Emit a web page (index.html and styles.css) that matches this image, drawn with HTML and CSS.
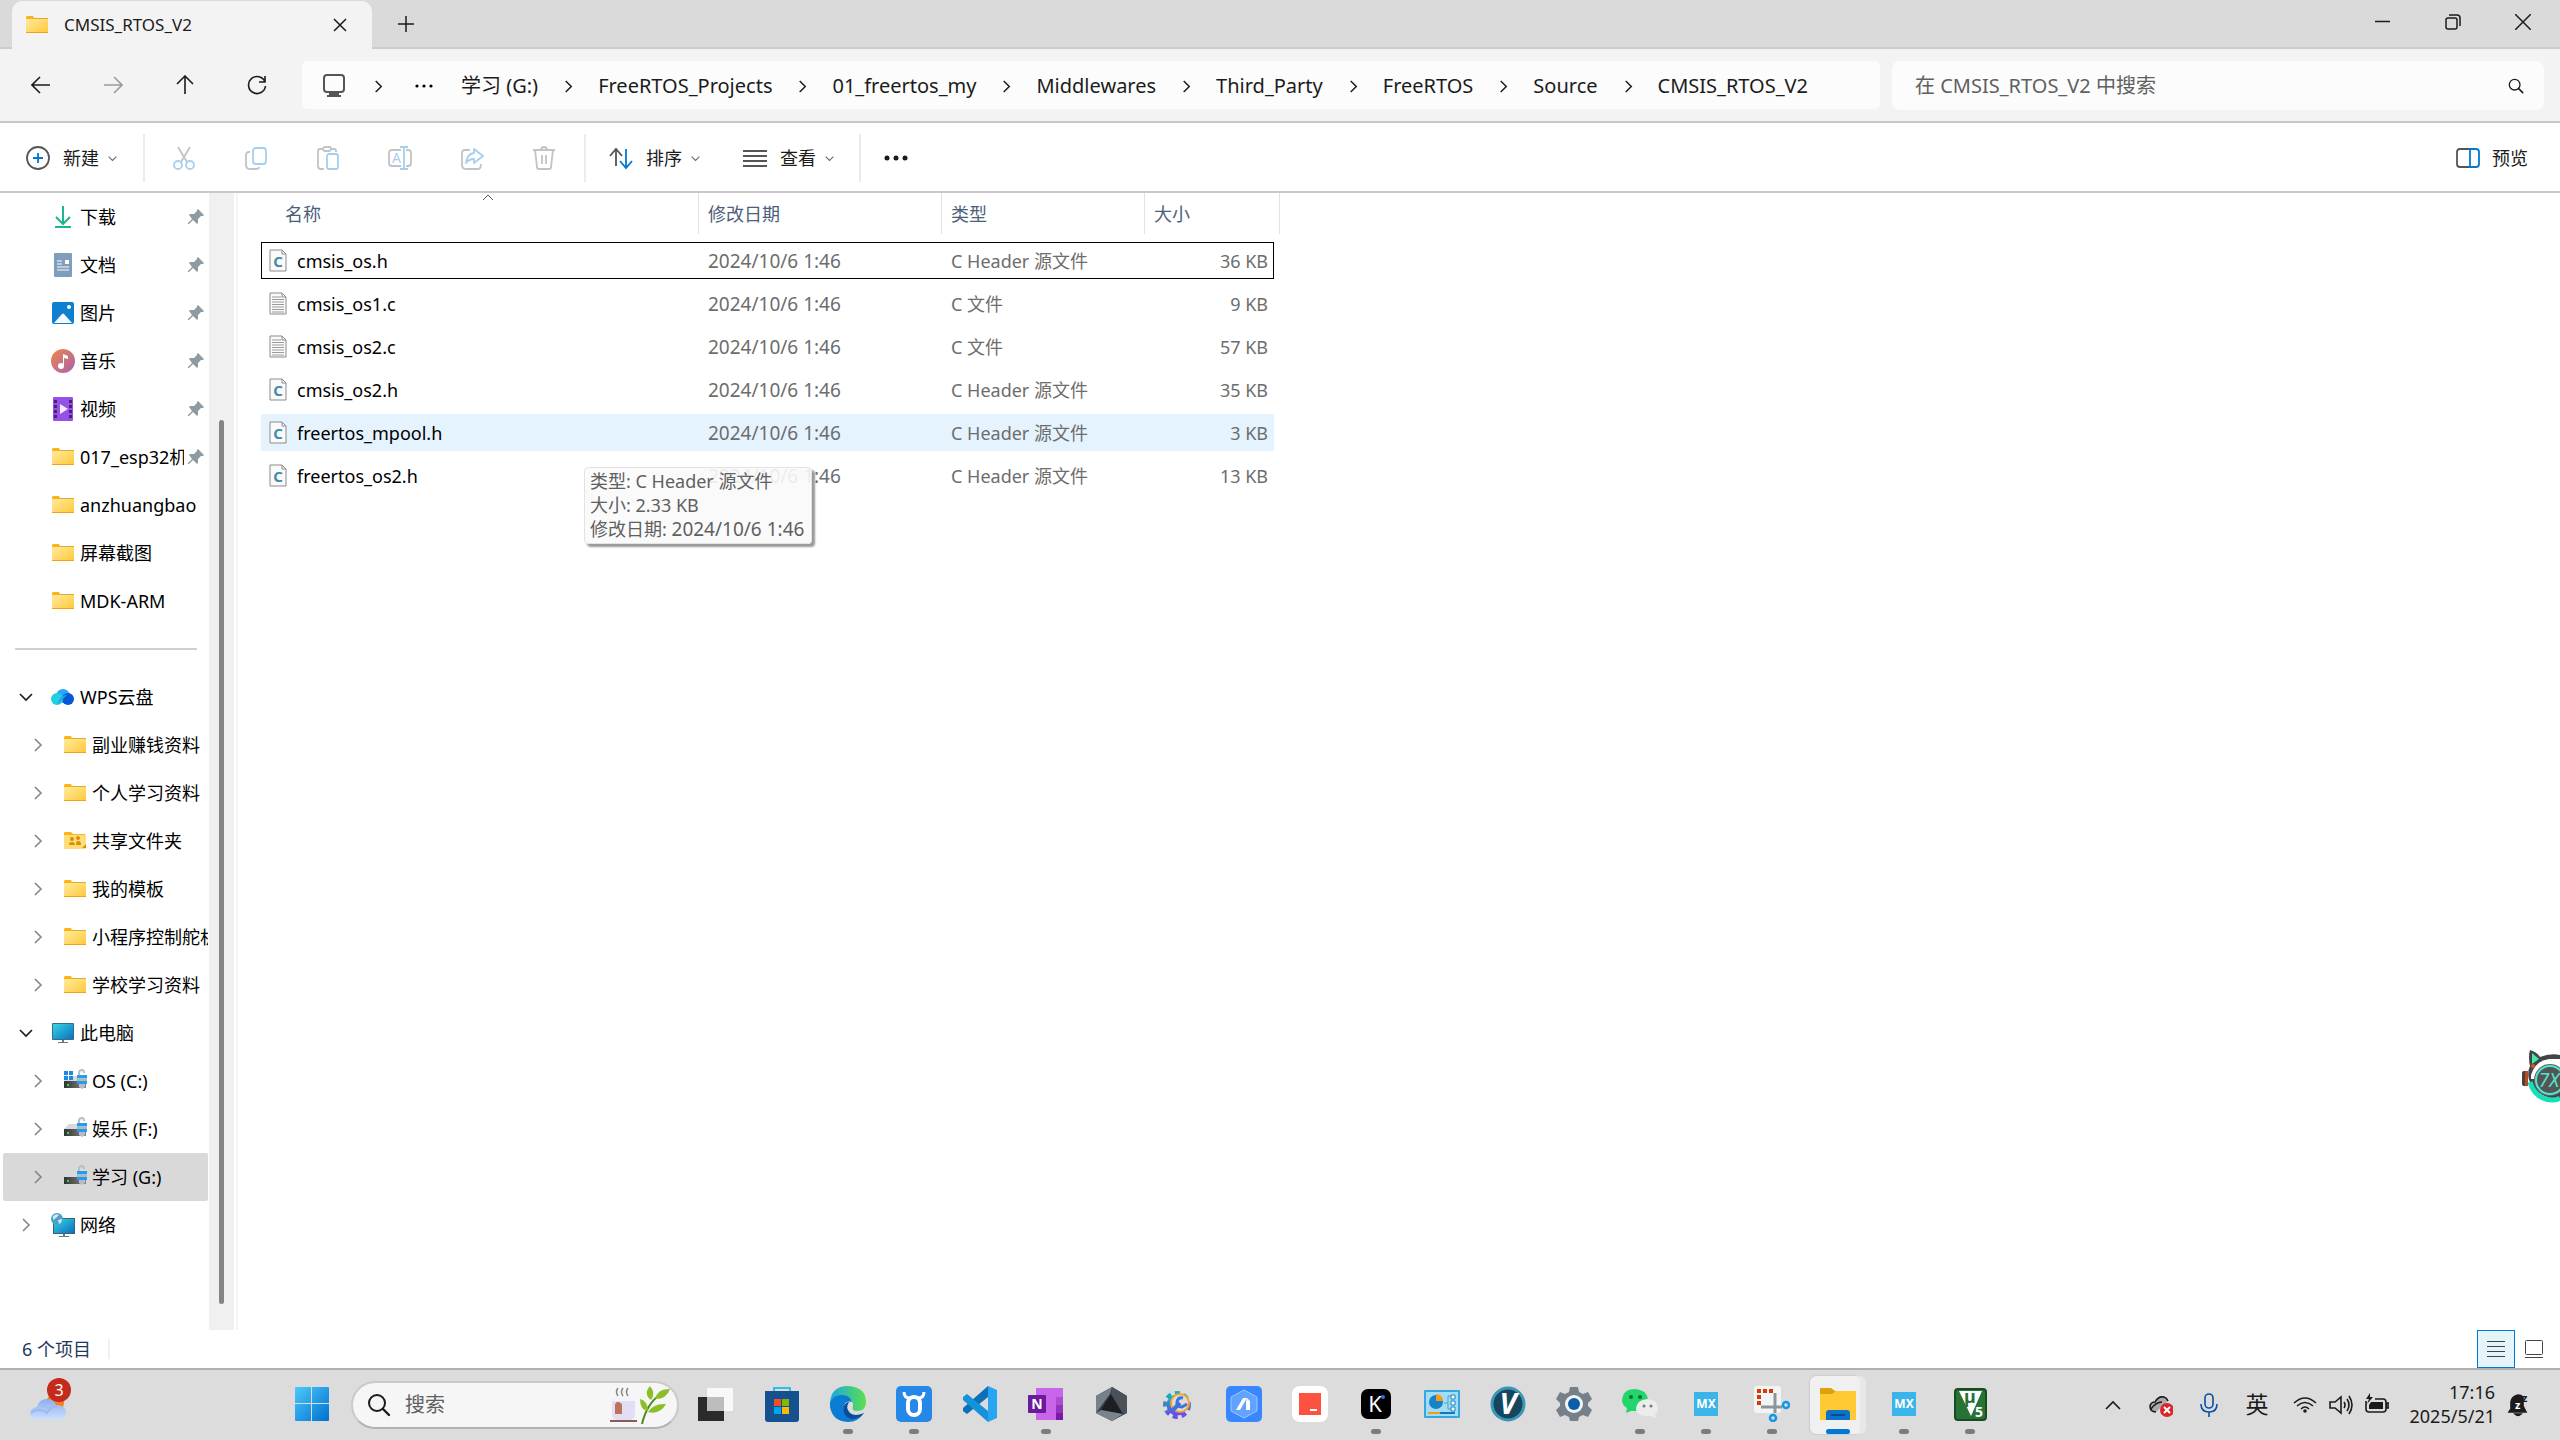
FILE: index.html
```
<!DOCTYPE html>
<html lang="zh-CN">
<head>
    <meta charset="UTF-8">
    <title>CMSIS_RTOS_V2</title>
    <link rel="stylesheet" href="styles.css">
</head>
<body>
    <!-- shared icons -->
    <svg class="defs" aria-hidden="true">
        <defs>
            <linearGradient id="gFolder" x1="0" y1="0" x2="1" y2="1"><stop offset="0" stop-color="#ffe9a0"/><stop offset="1" stop-color="#ffc937"/></linearGradient>
            <linearGradient id="gBlue" x1="0" y1="0" x2="1" y2="1"><stop offset="0" stop-color="#4cc9fb"/><stop offset="1" stop-color="#0070d0"/></linearGradient>
            <linearGradient id="gScreen" x1="0" y1="0" x2="1" y2="1"><stop offset="0" stop-color="#35d6e4"/><stop offset="1" stop-color="#0c6fc0"/></linearGradient>
            <linearGradient id="gDrive" x1="0" y1="0" x2="1" y2="0"><stop offset="0" stop-color="#333"/><stop offset="1" stop-color="#888"/></linearGradient>
        </defs>
        <symbol id="folder" viewBox="0 0 24 24">
            <path d="M1 5q0-2 1-2h6l1 2 1 1h12v4H1z" fill="#f9b416"/>
            <path d="M1 6h22v13q0 1-1 1H2q-1 0-1-1z" fill="url(#gFolder)"/>
            <path d="M1 19h22v1H1z" fill="#eba51c"/><path d="M9 5h14v1H9z" fill="#e9a820"/>
        </symbol>
        <symbol id="shared" viewBox="0 0 24 24">
            <path d="M1 4q0-1 1-1h6l2 2h12v5H1z" fill="#f9b416"/>
            <path d="M1 6h22v14H1z" fill="#ffdc7c"/>
            <circle cx="9" cy="10" r="2" fill="#dc9000"/><circle cx="15" cy="9" r="2" fill="#dc9000"/>
            <path d="M6 16q0-3 3-3t3 3zM13 16q0-4 2-4 3 0 3 3v1zM19 19l4-4v4z" fill="#dc9000"/>
        </symbol>
        <symbol id="pin" viewBox="0 0 16 16"><path d="M10 0l6 6-1 1-2 0-3 3 0 4-1 1-4-4-4 4-1 0 0-1 4-4-3-4 1-1 4 0 3-3 0-1z" fill="#8f9ba3"/></symbol>
        <symbol id="chev" viewBox="0 0 14 14"><path d="M4 1l6 6-6 6" fill="none" stroke="currentColor" stroke-width="1.6"/></symbol>
        <symbol id="chevdown" viewBox="0 0 14 14"><path d="M1 4l6 6 6-6" fill="none" stroke="currentColor" stroke-width="1.6"/></symbol>
        <symbol id="drive" viewBox="0 0 24 24">
            <path d="M1 12l5-5h13l4 5z" fill="#d8d9dc"/><path d="M1 12h22v7H1z" fill="url(#gDrive)"/>
            <path d="M4 15h2v2H4z" fill="#2fe03a"/>
            <path d="M16 8V4q0-3 3-3 2 0 2 3" fill="none" stroke="#b4bfc8" stroke-width="2"/>
            <rect x="14" y="6" width="10" height="9" fill="#2b9be8"/><path d="M14 9h10v3H14z" fill="#a8bccb"/>
            <path d="M16 15h6v3l-3 2-3-2z" fill="#b6bdc5"/>
        </symbol>
        <symbol id="hfile" viewBox="0 0 18 24">
            <path d="M1 1h12l4 4v17H1z" fill="#fafafa" stroke="#8b8b8b"/><path d="M13 1v4h4" fill="none" stroke="#8b8b8b"/>
            <text x="9" y="18" class="filemark">C</text>
        </symbol>
        <symbol id="cfile" viewBox="0 0 18 24">
            <path d="M1 1h12l4 4v17H1z" fill="#fafafa" stroke="#8b8b8b"/><path d="M13 1v4h4" fill="none" stroke="#8b8b8b"/>
            <path d="M3 5h9M3 7.500h12M3 10h12M3 12.500h12M3 15h12M3 17.500h12M3 20h12" stroke="#9a9a9a" stroke-width="1"/>
        </symbol>
        <symbol id="lens" viewBox="0 0 24 24"><circle cx="10" cy="10" r="8" fill="none" stroke="currentColor" stroke-width="2"/><path d="M16 16l6 6" stroke="currentColor" stroke-width="2.400" stroke-linecap="round"/></symbol>
        <symbol id="mx" viewBox="0 0 36 36"><path d="M6 6h24v24H6z" fill="#3bb4ea"/><text x="18" y="22" class="mark mx">MX</text></symbol>
    </svg>

    <header class="titlebar">
        <div class="tab">
            <svg class="i24"><use href="#folder"/></svg>
            <span class="tab-name">CMSIS_RTOS_V2</span>
            <button class="tab-close" aria-label="关闭标签页"><svg class="i14" viewBox="0 0 14 14"><path d="M1 1l12 12M13 1L1 13"/></svg></button>
        </div>
        <button class="tab-add" aria-label="新标签页"><svg class="i16" viewBox="0 0 16 16"><path d="M8 0v16M0 8h16"/></svg></button>
        <div class="window-buttons">
            <button aria-label="最小化"><svg class="i16" viewBox="0 0 16 16"><path d="M0 7.500h15"/></svg></button>
            <button aria-label="还原"><svg class="i16" viewBox="0 0 16 16"><rect x="1" y="4" width="11" height="11" rx="2"/><path d="M4 1h8q3 0 3 3v8"/></svg></button>
            <button aria-label="关闭"><svg class="i16" viewBox="0 0 16 16"><path d="M0 0l16 16M16 0L0 16"/></svg></button>
        </div>
    </header>

    <div class="navbar">
        <div class="nav-buttons">
            <button aria-label="后退"><svg class="i20" viewBox="0 0 20 20"><path d="M19 10H2M9 2l-8 8 8 8"/></svg></button>
            <button aria-label="前进" class="off"><svg class="i20" viewBox="0 0 20 20"><path d="M1 10h17M11 2l8 8-8 8"/></svg></button>
            <button aria-label="上移"><svg class="i20" viewBox="0 0 20 20"><path d="M10 19V2M2 9l8-8 8 8"/></svg></button>
            <button aria-label="刷新"><svg class="i20" viewBox="0 0 20 20"><path d="M18 7A8.500 8.500 0 1 0 18.500 11M18 1v6h-6"/></svg></button>
        </div>
        <nav class="address">
            <svg class="monitor" viewBox="0 0 24 24"><rect x="2" y="1" width="20" height="17" rx="3"/><path d="M8 18v4M16 18v4M5 22h14M8 20h8"/></svg>
            <svg class="crumb-sep"><use href="#chev"/></svg>
            <svg class="more" viewBox="0 0 20 4"><circle cx="3" cy="2" r="1.600"/><circle cx="10" cy="2" r="1.600"/><circle cx="17" cy="2" r="1.600"/></svg>
            <a href="#">学习 (G:)</a>
            <svg class="crumb-sep"><use href="#chev"/></svg>
            <a href="#">FreeRTOS_Projects</a>
            <svg class="crumb-sep"><use href="#chev"/></svg>
            <a href="#">01_freertos_my</a>
            <svg class="crumb-sep"><use href="#chev"/></svg>
            <a href="#">Middlewares</a>
            <svg class="crumb-sep"><use href="#chev"/></svg>
            <a href="#">Third_Party</a>
            <svg class="crumb-sep"><use href="#chev"/></svg>
            <a href="#">FreeRTOS</a>
            <svg class="crumb-sep"><use href="#chev"/></svg>
            <a href="#">Source</a>
            <svg class="crumb-sep"><use href="#chev"/></svg>
            <a href="#">CMSIS_RTOS_V2</a>
        </nav>
        <div class="search">
            <input type="text" aria-label="搜索文件" placeholder="在 CMSIS_RTOS_V2 中搜索">
            <svg class="i16"><use href="#lens"/></svg>
        </div>
    </div>

    <div class="toolbar">
        <button class="tool new"><svg class="i24" viewBox="0 0 24 24"><circle cx="12" cy="12" r="11"/><path d="M12 7v10M7 12h10" class="blue"/></svg>新建<svg class="i8"><use href="#chevdown"/></svg></button>
        <span class="divider"></span>
        <div class="tool-icons">
            <button aria-label="剪切"><svg class="i24" viewBox="0 0 24 24"><path d="M6 1l9 15M18 1L9 16"/><circle cx="6" cy="19" r="4" class="blue"/><circle cx="18" cy="19" r="4" class="blue"/></svg></button>
            <button aria-label="复制"><svg class="i24" viewBox="0 0 24 24"><path d="M6 6H5q-3 0-3 3v10q0 4 4 4h6q3 0 3-2"/><rect x="9" y="2" width="13" height="16" rx="3" class="blue"/></svg></button>
            <button aria-label="粘贴"><svg class="i24" viewBox="0 0 24 24"><path d="M8 23H5q-3 0-3-3V5q0-2 2-2h3M15 3h3q2 0 2 2v1"/><rect x="7" y="1" width="8" height="4" rx="2"/><rect x="11" y="8" width="11" height="15" rx="2" class="blue"/></svg></button>
            <button aria-label="重命名"><svg class="i24" viewBox="0 0 24 24"><path d="M13 4H4Q1 4 1 7v10q0 3 3 3h9M18 4h2q3 0 3 3v10q0 3-3 3h-2"/><path d="M12 1h8M12 23h8M16 1v22" class="blue"/><text x="4" y="17" class="rename-a">A</text></svg></button>
            <button aria-label="共享"><svg class="i24" viewBox="0 0 24 24"><path d="M10 4H5Q2 4 2 7v12q0 4 4 4h12q3 0 3-5"/><path d="M14 3l9 7-9 7v-4q-5 0-8 4 1-9 8-10z" class="blue" stroke-linejoin="round"/></svg></button>
            <button aria-label="删除"><svg class="i24" viewBox="0 0 24 24"><path d="M1 4h22M9 4q0-3 3-3t3 3M3 4l2 17q0 2 2 2h10q2 0 2-2l2-17M10 9v9M14 9v9"/></svg></button>
        </div>
        <span class="divider"></span>
        <button class="tool"><svg class="i24" viewBox="0 0 24 24"><path d="M7 20V4M1 10l6-7 6 7"/><path d="M17 3v18M11 15l6 7 6-7" class="blue"/></svg>排序<svg class="i8"><use href="#chevdown"/></svg></button>
        <button class="tool view"><svg class="i24" viewBox="0 0 24 24"><path d="M0 5h24M0 10h24M0 15h24M0 20h24"/></svg>查看<svg class="i8"><use href="#chevdown"/></svg></button>
        <span class="divider"></span>
        <button class="tool dots" aria-label="更多"><svg class="i24" viewBox="0 0 24 24"><circle cx="3" cy="12" r="2.500"/><circle cx="12" cy="12" r="2.500"/><circle cx="21" cy="12" r="2.500"/></svg></button>
        <button class="tool preview"><svg class="i24" viewBox="0 0 24 24"><path d="M14 3H4Q1 3 1 6v12q0 3 3 3h10"/><path d="M14 3h6q3 0 3 3v12q0 3-3 3h-6z" class="blue"/></svg>预览</button>
    </div>

    <div class="main">
        <nav class="sidebar">
            <ul class="tree">
                <li><a href="#"><svg class="i24" viewBox="0 0 24 24"><path d="M12 1v17M5 12l7 7 7-7" fill="none" stroke="#1fb394" stroke-width="2"/><path d="M4 22h16" stroke="#1fb394" stroke-width="2"/></svg><span>下载</span><svg class="pin"><use href="#pin"/></svg></a></li>
                <li><a href="#"><svg class="i24" viewBox="0 0 24 24"><rect x="3" y="0" width="18" height="24" rx="1" fill="#7f9dbc"/><path d="M6 8h5M6 11h5M6 14h12M6 17h12" stroke="#fff"/><path d="M14 7h4v4h-4z" fill="#fff"/></svg><span>文档</span><svg class="pin"><use href="#pin"/></svg></a></li>
                <li><a href="#"><svg class="i24" viewBox="0 0 24 24"><rect x="1" y="1" width="22" height="22" rx="2" fill="#0f7fd0"/><path d="M3 22l8-9q1-1 2 0l8 9z" fill="#f3f9ff"/><circle cx="18" cy="6" r="2" fill="#fff"/></svg><span>图片</span><svg class="pin"><use href="#pin"/></svg></a></li>
                <li><a href="#"><svg class="i24" viewBox="0 0 24 24"><defs><linearGradient id="gMusic" x1="0" y1="0" x2="1" y2="1"><stop offset="0" stop-color="#f0864a"/><stop offset="1" stop-color="#a763ad"/></linearGradient></defs><circle cx="12" cy="12" r="12" fill="url(#gMusic)"/><circle cx="10" cy="17" r="3" fill="#fff"/><path d="M12 17V5l5 2v3l-4-1v8z" fill="#fff"/></svg><span>音乐</span><svg class="pin"><use href="#pin"/></svg></a></li>
                <li><a href="#"><svg class="i24" viewBox="0 0 24 24"><rect x="2" y="0" width="20" height="24" rx="1" fill="#9550e6"/><path d="M4.500 3v20M19.500 3v20" stroke="#4b2079" stroke-width="3" stroke-dasharray="3 2"/><path d="M9 7l8 5-8 5z" fill="#f4eaff"/></svg><span>视频</span><svg class="pin"><use href="#pin"/></svg></a></li>
                <li><a href="#"><svg class="i24"><use href="#folder"/></svg><span>017_esp32机器人</span><svg class="pin"><use href="#pin"/></svg></a></li>
                <li><a href="#"><svg class="i24"><use href="#folder"/></svg><span>anzhuangbao</span></a></li>
                <li><a href="#"><svg class="i24"><use href="#folder"/></svg><span>屏幕截图</span></a></li>
                <li><a href="#"><svg class="i24"><use href="#folder"/></svg><span>MDK-ARM</span></a></li>
                <li class="rule"></li>
                <li><a href="#" class="root open"><svg class="i14"><use href="#chevdown"/></svg><svg class="i24" viewBox="0 0 24 24"><circle cx="12" cy="11" r="7" fill="#2aa7f8"/><circle cx="17" cy="14" r="6" fill="#0858d6"/><circle cx="6" cy="14" r="6" fill="#22d0de"/><path d="M6 20l10-10q-6-1-10 10z" fill="#13a4f5"/></svg><span>WPS云盘</span></a></li>
                <li><a href="#" class="child"><svg class="i14"><use href="#chev"/></svg><svg class="i24"><use href="#folder"/></svg><span>副业赚钱资料</span></a></li>
                <li><a href="#" class="child"><svg class="i14"><use href="#chev"/></svg><svg class="i24"><use href="#folder"/></svg><span>个人学习资料</span></a></li>
                <li><a href="#" class="child"><svg class="i14"><use href="#chev"/></svg><svg class="i24"><use href="#shared"/></svg><span>共享文件夹</span></a></li>
                <li><a href="#" class="child"><svg class="i14"><use href="#chev"/></svg><svg class="i24"><use href="#folder"/></svg><span>我的模板</span></a></li>
                <li><a href="#" class="child"><svg class="i14"><use href="#chev"/></svg><svg class="i24"><use href="#folder"/></svg><span>小程序控制舵机</span></a></li>
                <li><a href="#" class="child"><svg class="i14"><use href="#chev"/></svg><svg class="i24"><use href="#folder"/></svg><span>学校学习资料</span></a></li>
                <li><a href="#" class="root open"><svg class="i14"><use href="#chevdown"/></svg><svg class="i24" viewBox="0 0 24 24"><rect x="1" y="2" width="22" height="17" rx="1" fill="#356d8c"/><path d="M2 3h20v15H2z" fill="url(#gScreen)"/><path d="M11 19h2v2h4v1H7v-1h4z" fill="#6c7780"/></svg><span>此电脑</span></a></li>
                <li><a href="#" class="child"><svg class="i14"><use href="#chev"/></svg><svg class="i24" viewBox="0 0 24 24"><use href="#drive"/><path d="M1 2h9v9H1z" fill="#1a8be0"/><path d="M5.500 2v9M1 6.500h9" stroke="#fff"/></svg><span>OS (C:)</span></a></li>
                <li><a href="#" class="child"><svg class="i14"><use href="#chev"/></svg><svg class="i24"><use href="#drive"/></svg><span>娱乐 (F:)</span></a></li>
                <li><a href="#" class="child current"><svg class="i14"><use href="#chev"/></svg><svg class="i24"><use href="#drive"/></svg><span>学习 (G:)</span></a></li>
                <li><a href="#" class="root"><svg class="i14"><use href="#chev"/></svg><svg class="i24" viewBox="0 0 24 24"><path d="M2 5h22v16H2z" fill="#3b6278"/><path d="M3 6h20v14H3z" fill="url(#gScreen)"/><path d="M12 21h2v2h4v1H8v-1h4z" fill="#6c7780"/><circle cx="6" cy="6" r="6" fill="#4ba0c8"/><path d="M2 3q4-3 6-1L5 5 2 7zM7 7l4-1q0 4-3 5z" fill="#cde8f2"/></svg><span>网络</span></a></li>
            </ul>
            <div class="scroll"><div class="thumb"></div></div>
        </nav>

        <main class="files">
            <svg class="sort-mark" viewBox="0 0 12 8"><path d="M1 7l5-5 5 5"/></svg>
            <table>
                <thead>
                    <tr><th class="c-name">名称</th><th class="c-date">修改日期</th><th class="c-type">类型</th><th class="c-size">大小</th><th class="c-end"></th></tr>
                </thead>
                <tbody>
                    <tr class="focus"><td><svg class="file"><use href="#hfile"/></svg>cmsis_os.h</td><td>2024/10/6 1:46</td><td>C Header 源文件</td><td>36 KB</td></tr>
                    <tr><td><svg class="file"><use href="#cfile"/></svg>cmsis_os1.c</td><td>2024/10/6 1:46</td><td>C 文件</td><td>9 KB</td></tr>
                    <tr><td><svg class="file"><use href="#cfile"/></svg>cmsis_os2.c</td><td>2024/10/6 1:46</td><td>C 文件</td><td>57 KB</td></tr>
                    <tr><td><svg class="file"><use href="#hfile"/></svg>cmsis_os2.h</td><td>2024/10/6 1:46</td><td>C Header 源文件</td><td>35 KB</td></tr>
                    <tr class="hover"><td><svg class="file"><use href="#hfile"/></svg>freertos_mpool.h</td><td>2024/10/6 1:46</td><td>C Header 源文件</td><td>3 KB</td></tr>
                    <tr><td><svg class="file"><use href="#hfile"/></svg>freertos_os2.h</td><td>2024/10/6 1:46</td><td>C Header 源文件</td><td>13 KB</td></tr>
                </tbody>
            </table>
            <div class="tooltip">类型: C Header 源文件<br>大小: 2.33 KB<br>修改日期: <span class="date">2024/10/6 1:46</span></div>
        </main>
    </div>

    <div class="statusbar">
        <span class="count">6 个项目</span>
        <button class="view-btn active" aria-label="详细信息"><svg class="i20" viewBox="0 0 20 20"><path d="M1 2.500h18M1 7.500h18M1 12.500h18M1 17.500h18"/></svg></button>
        <button class="view-btn" aria-label="大图标"><svg class="i20" viewBox="0 0 20 20"><rect x="1.500" y="1.500" width="17" height="14" rx="1"/><path d="M1 18.500h18"/></svg></button>
    </div>

    <footer class="taskbar">
        <button class="weather" aria-label="天气">
            <svg viewBox="0 0 36 36"><defs><linearGradient id="gCloud" x1="0" y1="0" x2="0" y2="1"><stop offset="0" stop-color="#8aaef0"/><stop offset="1" stop-color="#d0e0fb"/></linearGradient></defs><circle cx="25" cy="14" r="9" fill="#f58220"/><path d="M8 31q-8 0-8-6t7-7q2-8 10-8 7 0 9 6 10 0 10 8 0 7-7 7z" fill="url(#gCloud)"/><path d="M1 24q8-6 16 0 4-8 12-7" fill="none" stroke="#9bb9f3" stroke-width="2"/></svg>
            <span class="badge">3</span>
        </button>
        <div class="apps">
            <button class="start" aria-label="开始"><svg class="i36" viewBox="0 0 36 36"><path d="M1 2q0-1 1-1h15v16H1zM18 1h16q1 0 1 1v15H18zM1 18h16v17H2q-1 0-1-1zM18 18h17v16q0 1-1 1H18z" fill="url(#gBlue)"/></svg></button>
            <div class="task-search">
                <svg class="i24"><use href="#lens"/></svg>
                <input type="text" aria-label="搜索" placeholder="搜索">
                <svg class="tea" viewBox="0 0 62 40">
                    <path d="M9 3q-3 4 0 8M14 3q-3 4 0 8M19 3q-3 4 0 8" stroke="#888" fill="none" stroke-width="1.500"/><path d="M3 13h23v16q0 6-6 6H9q-6 0-6-6z" fill="#e4def5"/><path d="M3 13h23v3H3z" fill="#f6f2fd"/><path d="M6 19l2-2h2l3 2v10H6z" fill="#ba7558"/><path d="M1 35h27v2H1z" fill="#8a5b58"/>
                    <path d="M33 39Q38 18 52 9" stroke="#4c8a1c" stroke-width="2" fill="none"/><path d="M41 1q-7 8 1 14 5-7-1-14zM61 4q-12-1-15 10 12 0 15-10zM31 14q0 11 8 12 0-10-8-12zM57 19q-12-1-18 8 12 3 18-8z" fill="#8bbf28"/>
                </svg>
            </div>
            <button aria-label="任务视图"><svg class="i36" viewBox="0 0 36 36"><path d="M0 11h26v24H0z" fill="#2b2b2b"/><path d="M9 2h26v23H9z" fill="#fff" fill-opacity=".8"/><path d="M9 11h17v14H9z" fill="#bdbdbd"/></svg></button>
            <button aria-label="应用商店"><svg class="i36" viewBox="0 0 36 36"><path d="M10 7V2h16v5" fill="none" stroke="#2ebdf2" stroke-width="2"/><path d="M1 5h34v28q0 3-3 3H4q-3 0-3-3z" fill="#15508f"/><path d="M10 13h7v7h-7z" fill="#f25022"/><path d="M18 13h7v7h-7z" fill="#7fba00"/><path d="M10 21h7v7h-7z" fill="#00a4ef"/><path d="M18 21h7v7h-7z" fill="#ffb900"/></svg></button>
            <button aria-label="Edge" class="on"><svg class="i36" viewBox="0 0 36 36"><defs><linearGradient id="gEdge"><stop offset="0" stop-color="#1ca7e0"/><stop offset="1" stop-color="#5be04c"/></linearGradient></defs><path d="M0 17Q1 0 18 0q18 1 18 16 0 9-9 9-6 0-4-5 0-8-8-8Q3 12 0 24z" fill="url(#gEdge)"/><path d="M0 17q3-8 12-8 8 0 10 7-8-2-8 6 1 10 12 8 5-1 8-3-6 9-16 9Q0 35 0 17z" fill="#0b7cd4"/><path d="M14 20q-2 10 7 13 8 0 13-6-9 4-14 0-5-5-1-11-3 0-5 4z" fill="#0c4b97"/></svg></button>
            <button aria-label="助手" class="on"><svg class="i36" viewBox="0 0 36 36"><rect width="36" height="36" rx="5" fill="#2587e8"/><path d="M8 6q0 6 6 6M28 6q0 6-6 6" stroke="#fff" stroke-width="3" fill="none"/><rect x="12" y="11" width="12" height="18" rx="6" fill="none" stroke="#fff" stroke-width="4"/></svg></button>
            <button aria-label="VS Code"><svg class="i36" viewBox="0 0 36 36"><path d="M26 0v11L5 28l-4-3v-3z" fill="#0b70b8"/><path d="M1 14v-3l4-3 21 17v11L1 14z" fill="#1592d8"/><path d="M26 0l9 4v28l-9 4z" fill="#27a5f2"/></svg></button>
            <button aria-label="OneNote" class="on"><svg class="i36" viewBox="0 0 36 36"><path d="M8 2h27v32H8z" fill="#ca64ea"/><path d="M28 11h7v8h-7z" fill="#ae4bd5"/><path d="M28 19h7v8h-7z" fill="#9332bf"/><path d="M28 27h7v7h-7z" fill="#7719aa"/><rect x="0" y="9" width="18" height="18" rx="1" fill="#6b1a9c"/><text x="9" y="23" class="mark onenote">N</text></svg></button>
            <button aria-label="立方"><svg class="i36" viewBox="0 0 36 36"><path d="M18 1l15 9v17l-15 8-16-8V10z" fill="#353a40"/><path d="M18 1L2 10v17l14-19z" fill="#76808a"/><path d="M17 8L7 24l22 4z" fill="#1d2023"/><path d="M18 1l15 9v17l-4 1L17 8z" fill="#4a5159"/><path d="M7 24l22 4-11 7-16-8z" fill="#7b838b"/></svg></button>
            <button aria-label="工具"><svg class="i36" viewBox="0 0 36 36"><defs><linearGradient id="gTool" x1="0" y1="0" x2="0" y2="1"><stop offset="0" stop-color="#0bb5bd"/><stop offset="1" stop-color="#6b4ce8"/></linearGradient></defs><circle cx="17" cy="19" r="8" fill="none" stroke="url(#gTool)" stroke-width="5"/><circle cx="17" cy="19" r="12" fill="none" stroke="url(#gTool)" stroke-width="4" stroke-dasharray="5 4"/><circle cx="20" cy="17" r="9" fill="#dcdcdc" stroke="#f8a32b" stroke-width="2"/><path d="M12 25l8-8" stroke="#4072dc" stroke-width="4"/><path d="M23 12q-5-1-6 4t5 5l5-3" fill="none" stroke="#4072dc" stroke-width="3"/></svg></button>
            <button aria-label="六边形"><svg class="i36" viewBox="0 0 36 36"><rect width="36" height="36" rx="5" fill="#3987ff"/><path d="M18 4l13 7v14l-13 7-13-7V11z" fill="#62a3ff" stroke="#9cc5ff"/><path d="M10 24l7-12h4l-7 12zM21 12l3 3v9h-4v-8" fill="#fff"/></svg></button>
            <button aria-label="便签"><svg class="i36" viewBox="0 0 36 36"><rect width="36" height="36" rx="8" fill="#fff"/><path d="M7 7h22v22H7z" fill="#fd5240"/><path d="M18 23h7v2h-7z" fill="#fff"/></svg></button>
            <button aria-label="Kimi" class="on"><svg class="i36" viewBox="0 0 36 36"><rect x="3" y="3" width="30" height="30" rx="7" fill="#000"/><text x="17" y="26" class="mark kimi">K</text><circle cx="25" cy="11" r="2" fill="#2d6df6"/></svg></button>
            <button aria-label="控制面板"><svg class="i36" viewBox="0 0 36 36"><rect x="0" y="4" width="36" height="28" rx="1" fill="#35a7dd"/><path d="M2 6h32v24H2z" fill="#a3dcf5"/><circle cx="12" cy="16" r="7" fill="#1584c8"/><path d="M12 8q7 1 7 7h-7z" fill="#f79a1c"/><path d="M20 17h4v-7h3M24 17v6h3" stroke="#4d9fc6" fill="none"/><path d="M27 9h4v4h-4zM27 15h4v4h-4zM27 21h4v4h-4z" fill="#fff" stroke="#1584c8"/><path d="M4 27h12" stroke="#f79a1c" stroke-width="2"/><path d="M16 27h15" stroke="#1679b5" stroke-width="2"/></svg></button>
            <button aria-label="V"><svg class="i36" viewBox="0 0 36 36"><circle cx="18" cy="18" r="16" fill="#16465e" stroke="#3a97b8" stroke-width="3"/><text x="18" y="28" class="mark vee">V</text></svg></button>
            <button aria-label="设置"><svg class="i36" viewBox="0 0 36 36"><path d="M14 1h8l1 5 4 2 5-2 4 7-4 4v3l4 4-4 7-5-2-4 2-1 4h-8l-1-4-4-2-5 2-4-7 4-4v-3l-4-4 4-7 5 2 4-2z" fill="#75808a"/><circle cx="18" cy="18" r="9" fill="#f4f4f4"/><circle cx="18" cy="18" r="6" fill="#0b5cab"/></svg></button>
            <button aria-label="微信" class="on"><svg class="i36" viewBox="0 0 36 36"><path d="M13 3q13 1 13 12 0 10-13 10H9l-5 2 1-5q-5-3-5-8Q1 3 13 3z" fill="#22d66b"/><path d="M25 13q11 1 11 9 0 5-3 6l1 4-5-2q-15 1-15-8 1-8 11-9z" fill="#ececec"/><circle cx="9" cy="11" r="2" fill="#146c39"/><circle cx="18" cy="11" r="2" fill="#146c39"/><circle cx="22" cy="20" r="1.500" fill="#777"/><circle cx="29" cy="20" r="1.500" fill="#777"/></svg></button>
            <button aria-label="STM32CubeMX" class="on"><svg class="i36"><use href="#mx"/></svg></button>
            <button aria-label="截图工具" class="on"><svg class="i36" viewBox="0 0 36 36"><rect width="27" height="27" rx="3" fill="#f2f5f8"/><path d="M5 19V5h14" fill="none" stroke="#d83b01" stroke-width="4" stroke-dasharray="4 2"/><path d="M21 7v20M7 21h21" stroke="#8d959c" stroke-width="3"/><circle cx="32" cy="19" r="3" fill="none" stroke="#1397e5" stroke-width="2.500"/><circle cx="19" cy="32" r="3" fill="none" stroke="#1397e5" stroke-width="2.500"/></svg></button>
            <button aria-label="文件资源管理器" class="on explorer"><svg class="i36" viewBox="0 0 36 36"><path d="M0 3q0-1 1-1h10l4 3h21v6H0z" fill="#dda109"/><path d="M0 8h12l4-3h19q1 0 1 1v28H0z" fill="#ffc933"/><path d="M6 34v-7q0-3 3-3h18q3 0 3 3v7z" fill="#0d72c9"/><path d="M11 29h14" stroke="#064c91" stroke-width="2"/></svg></button>
            <button aria-label="STM32CubeMX 2" class="on"><svg class="i36"><use href="#mx"/></svg></button>
            <button aria-label="Keil" class="on"><svg class="i36" viewBox="0 0 36 36"><rect x="3" y="3" width="31" height="31" rx="3" fill="#287235" stroke="#174b20" stroke-width="2"/><path d="M7 5h23L19 30z" fill="#fff"/><text x="18" y="17" class="mark mu">µ</text><text x="27" y="31" class="mark five">5</text></svg></button>
        </div>
        <div class="tray">
            <button aria-label="显示隐藏的图标"><svg class="i16" viewBox="0 0 16 16"><path d="M1 12l7-7 7 7"/></svg></button>
            <button aria-label="云"><svg class="i24" viewBox="0 0 24 24"><path d="M7 19q-6 0-6-6 1-4 5-4 3-6 9-5 3 1 4 4" fill="#aaa"/><path d="M2 16q5-7 11-7" fill="none"/><circle cx="18" cy="17" r="7" class="red"/><path d="M15 14l6 6M21 14l-6 6" class="white"/></svg></button>
            <button aria-label="麦克风" class="mic"><svg class="i24" viewBox="0 0 24 24"><rect x="8" y="1" width="8" height="14" rx="4"/><path d="M4 11q0 8 8 8t8-8M12 19v5"/></svg></button>
            <button class="ime">英</button>
            <div class="status-icons">
                <svg class="i24" viewBox="0 0 24 24"><path d="M1 10q11-10 22 0M4 13q8-7 16 0M8 16q4-4 8 0"/><circle cx="12" cy="18" r="1"/></svg>
                <svg class="i24" viewBox="0 0 24 24"><path d="M1 9h5l6-5v16l-6-5H1zM15 9q2 3 0 6M18 6q4 6 0 12M20 3q6 9 0 18"/></svg>
                <svg class="i24" viewBox="0 0 24 24"><path d="M1 8v8q0 3 3 3h14q3 0 3-3V9q0-3-3-3h-8M22 10v5h2v-5z"/><path d="M6 9h12v7H4v-4zM5 0L1 6h3l-2 5 6-7H5z" fill="#1b1b1b" stroke="none"/></svg>
            </div>
            <div class="clock"><span>17:16</span><span>2025/5/21</span></div>
            <svg class="i24 bell" viewBox="0 0 24 24"><path d="M3 19l2-3V9q1-6 7-7 3 0 5 2v9l3 6zM9 21h6q-3 3-6 0z" fill="#1b1b1b"/><text x="9" y="16" class="zz light">z</text><text x="16" y="9" class="zz">z</text></svg>
        </div>
    </footer>

    <!-- desktop assistant docked at the screen edge -->
    <svg class="pet" viewBox="0 0 38 54">
        <path d="M8 1q7 2 10 7 10-4 20-2v44q-22 0-31-19-2-8 1-14Q6 8 8 1z" fill="#444"/>
        <path d="M10 4l7 6-7 5z" fill="#46e8b1"/><path d="M9 26q4-14 18-16h11v20H9z" fill="#fff"/>
        <path d="M8 33q5 17 22 18 5 0 8-2" fill="none" stroke="#16dfb9" stroke-width="5"/>
        <circle cx="28" cy="31" r="16" fill="#666"/><circle cx="28" cy="31" r="14" fill="#555" stroke="#4ce8cf" stroke-width="2"/>
        <rect x="0" y="22" width="6" height="15" rx="2" fill="#444"/><path d="M3 22h3v15H3z" fill="#b94920"/><circle cx="11" cy="17" r="2" fill="#e2561b"/>
        <text x="27" y="38" class="pet-mark">7X</text>
    </svg>
</body>
</html>
```
FILE: styles.css
```
* { box-sizing: border-box; }
body { margin: 0; height: 100vh; display: flex; flex-direction: column; overflow: hidden; background: #fff; color: #1b1b1b; font: 18px/24px "Noto Sans", "Noto Sans CJK SC", sans-serif; }
button { background: none; border: none; padding: 0; font: inherit; color: inherit; display: flex; align-items: center; justify-content: center; }
a { color: inherit; text-decoration: none; }
input { border: none; background: none; font: inherit; padding: 0; outline: none; min-width: 0; }
input::placeholder { color: #606060; opacity: 1; }
svg { flex: none; }
.defs { position: absolute; width: 0; height: 0; }
.i8 { width: 9px; height: 9px; }
.i14 { width: 14px; height: 14px; }
.i16 { width: 16px; height: 16px; }
.i20 { width: 20px; height: 20px; }
.i24 { width: 24px; height: 24px; }
.i36 { width: 36px; height: 36px; }

/* title bar */
.titlebar { height: 49px; display: flex; background: #dadada; border-bottom: 2px solid #cdcdcd; padding: 0 2px 0 12px; flex: none; }
.titlebar button svg { fill: none; stroke: #1b1b1b; stroke-width: 1.5; }
.tab { width: 360px; height: 48px; margin-top: 1px; background: #f3f3f3; border-radius: 10px 10px 0 0; display: flex; align-items: center; padding: 0 25px 0 13px; gap: 15px; }
.tab-name { flex: 1; font-size: 17px; }
.tab-add { width: 68px; }
.window-buttons { display: flex; margin-left: auto; }
.window-buttons button { width: 70px; padding-bottom: 4px; }

/* address row */
.navbar { height: 74px; display: flex; align-items: center; background: #f3f3f3; border-bottom: 2px solid #c8c8c8; padding-right: 16px; flex: none; }
.nav-buttons { display: flex; width: 302px; padding-left: 5px; }
.nav-buttons button { width: 72px; height: 48px; }
.nav-buttons svg { fill: none; stroke: #1b1b1b; stroke-width: 1.6; }
.nav-buttons .off { opacity: 0.4; }
.address { flex: 1; height: 48px; background: #fcfcfc; border-radius: 6px; display: flex; align-items: center; padding: 2px 0 0 20px; font-size: 20px; white-space: nowrap; }
.monitor { width: 24px; height: 24px; fill: none; stroke: #555; stroke-width: 2; }
.crumb-sep { width: 13px; height: 13px; margin: 0 23px 0 24px; }
.monitor + .crumb-sep { margin-left: 26px; }
.more { width: 20px; height: 4px; margin: 0 27px 0 6px; }
.search { width: 652px; height: 49px; margin-left: 12px; background: #fcfcfc; border-radius: 8px; display: flex; align-items: center; padding: 2px 20px 0 23px; font-size: 20px; }
.search input { flex: 1; }

/* command bar */
.toolbar { height: 70px; display: flex; align-items: center; border-bottom: 2px solid #c8c8c8; padding: 2px 32px 0 26px; flex: none; }
.toolbar svg { fill: none; stroke: #555; stroke-width: 1.8; }
.toolbar .blue { stroke: #0078d4; }
.tool { gap: 13px; }
.tool .i8 { margin-left: -4px; color: #666; }
.new { margin-right: 26px; }
.divider { width: 2px; height: 48px; background: #ebebeb; }
.tool-icons { display: flex; padding: 0 4px 0 3px; }
.tool-icons button { width: 72px; opacity: 0.35; }
.rename-a { font: 14px "Noto Sans", sans-serif; fill: #0078d4; stroke: none; }
.divider + .tool { margin-left: 23px; }
.view { margin: 0 25px 0 43px; }
.toolbar .dots svg { fill: #1b1b1b; stroke: none; }
.preview { margin-left: auto; gap: 12px; }

/* folder tree */
.main { flex: 1; display: flex; min-height: 0; }
.sidebar { width: 238px; display: flex; border-right: 2px solid #f5f5f5; color: #000; }
.tree { list-style: none; margin: 0; padding: 0 1px 0 3px; width: 209px; overflow: hidden; }
.tree li { height: 48px; }
.tree a { height: 48px; display: flex; align-items: center; padding: 0 4px 0 48px; white-space: nowrap; }
.tree span { flex: 1; margin-left: 5px; overflow: hidden; }
.tree .root { padding-left: 16px; }
.tree .root .i24 { margin-left: 18px; }
.tree .child { padding: 0 0 0 28px; }
.tree .child .i24 { margin-left: 18px; }
.tree .i14 { color: #858585; }
.tree .open .i14 { color: #1b1b1b; }
.tree .current { background: #d9d9d9; border-radius: 2px; }
.tree .rule { padding: 23px 11px 0 12px; }
.rule::before { content: ""; display: block; height: 2px; background: #d0d0d0; }
.pin { width: 16px; height: 16px; margin-left: 4px; }
.scroll { width: 25px; background: #f0f0f0; padding: 227px 10px 26px; }
.thumb { height: 100%; background: #858585; border-radius: 3px; }

/* file list */
.files { flex: 1; position: relative; padding-left: 23px; }
.sort-mark { position: absolute; left: 244px; top: 0; width: 12px; height: 8px; fill: none; stroke: #555; }
table { width: 1019px; table-layout: fixed; border-collapse: separate; border-spacing: 0; }
th { height: 41px; padding: 0 0 0 9px; text-align: left; font-weight: normal; color: #4c607a; border-right: 1px solid #e2e2e2; }
.c-name { width: 438px; padding-left: 24px; }
.c-date { width: 243px; }
.c-type { width: 203px; }
.c-size { width: 129px; border: none; }
.c-end { width: 6px; padding: 0; }
tbody::before { content: ""; display: block; height: 5px; }
td { height: 43px; padding: 0 6px 0 8px; border: 3px solid #fff; border-width: 3px 0; color: #6d6d6d; white-space: nowrap; background-clip: padding-box; }
td:nth-child(1) { color: #000; }
td:nth-child(2) { font-size: 19px; padding-left: 9px; }
td:nth-child(3) { padding-left: 9px; }
td:nth-child(4) { text-align: right; }
.file { width: 18px; height: 24px; margin-right: 10px; vertical-align: top; }
.filemark { font: bold 15px "Noto Sans", sans-serif; fill: #438aac; text-anchor: middle; }
.hover td { background-color: #e5f3ff; }
.focus td { box-shadow: inset 0 1px #000, inset 0 -1px #000; }
.focus td:first-child { box-shadow: inset 1px 0 #000, inset 0 1px #000, inset 0 -1px #000; }
.focus td:last-child { box-shadow: inset -1px 0 #000, inset 0 1px #000, inset 0 -1px #000; }
.tooltip { position: absolute; left: 346px; top: 274px; padding: 1px 7px 2px 5px; background: rgba(249, 249, 249, 0.9); border: 1px solid #e3e3e3; border-radius: 4px; box-shadow: 3px 3px 2px #999; color: #606060; white-space: nowrap; }
.date { font-size: 19px; }

.statusbar { height: 38px; display: flex; align-items: center; padding: 0 7px 0 22px; flex: none; }
.count { color: #1e395b; line-height: 20px; padding-right: 17px; border-right: 2px solid #f0f0f0; margin-right: auto; }
.view-btn { width: 38px; height: 38px; border: 1px solid transparent; }
.view-btn svg { fill: none; stroke: #444; }
.active { background: #e5f3fb; border-color: #0078d4; }

/* taskbar */
.taskbar { height: 72px; display: flex; align-items: center; background: #dcdcdc; border-top: 2px solid #b0b0b0; flex: none; }
.weather { width: 96px; height: 70px; position: relative; }
.weather svg { width: 36px; height: 36px; margin-top: 4px; }
.badge { position: absolute; left: 47px; top: 8px; width: 24px; height: 24px; border-radius: 50%; background: #c42b1c; color: #fff; font-size: 16px; }
.apps { display: flex; align-items: center; margin-left: 183px; }
.apps > button { width: 66px; height: 68px; padding-bottom: 2px; position: relative; }
.task-search { width: 328px; height: 48px; margin: 0 4px 0 6px; border-radius: 24px; background: #f6f6f6; border: 2px solid #cacaca; border-bottom-color: #b3b3b3; display: flex; align-items: center; padding: 0 6px 0 14px; gap: 14px; font-size: 20px; }
.task-search input { flex: 1; }
.tea { width: 62px; height: 40px; }
.on::after { content: ""; position: absolute; left: 28px; bottom: 5px; width: 10px; height: 5px; border-radius: 3px; background: #7c7c7c; }
.explorer::before { content: ""; position: absolute; left: 5px; top: 5px; width: 50px; height: 58px; border-radius: 6px; background: #f0f0f0; box-shadow: 6px 0 #e8e8e8, 0 0 1px 1px #ccc; }
.explorer svg { position: relative; }
.explorer::after { left: 21px; width: 24px; background: #0078d4; }
.mark { font-family: "Noto Sans", sans-serif; font-weight: bold; fill: #fff; text-anchor: middle; }
.mx { font-size: 12px; }
.onenote { font-size: 14px; }
.kimi { font-size: 22px; font-weight: normal; }
.vee { font-size: 29px; font-style: italic; }
.mu { font-size: 18px; fill: #287235; }
.five { font-size: 14px; }
.tray { margin-left: auto; display: flex; align-items: center; padding-right: 30px; }
.tray button { width: 48px; height: 48px; }
.tray svg { fill: none; stroke: #1b1b1b; stroke-width: 1.6; }
.tray .red { fill: #d9252c; stroke: none; }
.tray .white { stroke: #fff; stroke-width: 2; }
.tray .mic svg { stroke: #0b4fa3; }
.tray .ime { font-size: 23px; padding-bottom: 2px; }
.status-icons { display: flex; gap: 12px; padding: 0 24px 0 12px; }
.clock { width: 82px; display: flex; flex-direction: column; align-items: flex-end; padding-bottom: 2px; }
.bell { margin-left: 11px; }
.zz { font: bold 11px "Noto Sans", sans-serif; fill: #1b1b1b; stroke: none; }
.tray .light { fill: #fff; }
.pet { position: absolute; right: 0; top: 1049px; width: 38px; height: 54px; }
.pet-mark { font: italic 19px "Noto Sans", sans-serif; fill: #4ce8cf; text-anchor: middle; }
```
